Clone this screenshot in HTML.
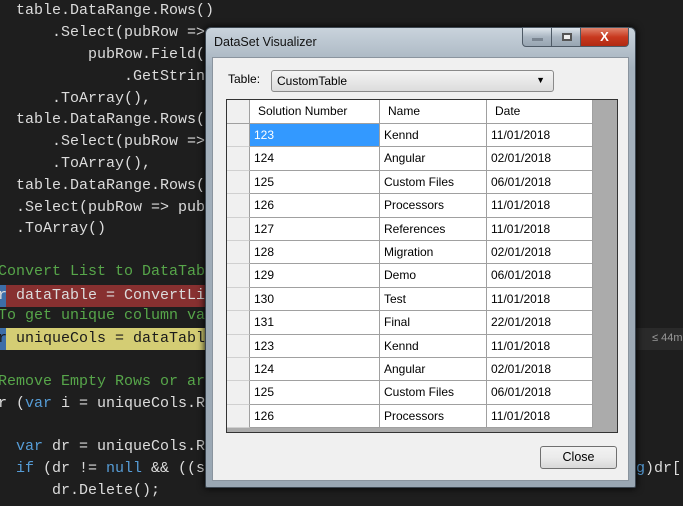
<!DOCTYPE html>
<html><head><meta charset="utf-8"><style>
*{margin:0;padding:0;box-sizing:border-box}
body{width:683px;height:506px;overflow:hidden;background:#1e1e1e;position:relative;font-family:"Liberation Mono",monospace}
.l{position:absolute;left:16px;font-size:15px;color:#dcdcdc;white-space:pre;line-height:20px;height:20px}
.c{color:#57a64a}.k{color:#569cd6}
.win{position:absolute;left:205px;top:27px;width:431px;height:461px;border-radius:6px 6px 2px 2px;background:linear-gradient(#c9d3dc,#a4b1bd 40px,#9aa7b3);border:1px solid #3c4650;box-shadow:0 0 8px #000}
.ui{font-family:"Liberation Sans",sans-serif;font-size:12px;color:#000}
.title{position:absolute;left:8px;top:7px;font-size:12.5px;color:#111}
.client{position:absolute;left:6px;top:29px;width:417px;height:424px;background:#f0f0f0;border:1px solid #8a949e}
.btn{position:absolute;top:-1px;height:20px;border:1px solid #4e5a66;background:linear-gradient(#dfe6ec,#aab6c2 50%,#98a5b2)}
.grid{position:absolute;left:13px;top:41px;width:392px;height:334px;border:1px solid #333;background:#ababab;overflow:hidden}
.row{position:absolute;left:0;height:23.4px;width:366px}
.cell{position:absolute;top:0;height:100%;background:#fff;border-right:1px solid #a0a0a0;border-bottom:1px solid #a0a0a0;padding-left:4px;line-height:22px;font-size:12px}
.rh{position:absolute;left:0;top:0;width:23px;height:100%;background:#f0f0f0;border-right:1px solid #a0a0a0;border-bottom:1px solid #d0d0d0}
</style></head><body>
<div class="l" style="top:1px">table.DataRange.Rows()</div>
<div class="l" style="top:23px">    .Select(pubRow =></div>
<div class="l" style="top:45px">        pubRow.Field(</div>
<div class="l" style="top:67px">            .GetStrin</div>
<div class="l" style="top:89px">    .ToArray(),</div>
<div class="l" style="top:110px">table.DataRange.Rows(</div>
<div class="l" style="top:132px">    .Select(pubRow =></div>
<div class="l" style="top:154px">    .ToArray(),</div>
<div class="l" style="top:176px">table.DataRange.Rows(</div>
<div class="l" style="top:198px">.Select(pubRow => pub</div>
<div class="l" style="top:219px">.ToArray()</div>
<div class="l c" style="top:262px;left:-2px">Convert List to DataTab</div>
<div style="position:absolute;left:0;top:285px;width:210px;height:22px;background:#873030"></div>
<div style="position:absolute;left:0;top:285px;width:6px;height:22px;background:#3d6ea8"></div>
<div class="l" style="top:286px;left:-2px">r dataTable = ConvertLi</div>
<div class="l c" style="top:306px;left:-2px">To get unique column va</div>
<div style="position:absolute;left:0;top:328px;width:210px;height:22px;background:#d4cd74"></div>
<div style="position:absolute;left:0;top:328px;width:6px;height:22px;background:#3d6ea8"></div>
<div class="l" style="top:329px;left:-2px;color:#1a1a1a">r uniqueCols = dataTabl</div>
<div style="position:absolute;left:636px;top:328px;width:47px;height:22px;background:#2a2a2a"></div>
<div class="ui" style="position:absolute;left:652px;top:332px;color:#999;font-size:11px">≤ 44m</div>
<div class="l c" style="top:372px;left:-2px">Remove Empty Rows or ar</div>
<div class="l" style="top:394px;left:-2px">r (<span class="k">var</span> i = uniqueCols.R</div>
<div class="l" style="top:437px"><span class="k">var</span> dr = uniqueCols.R</div>
<div class="l" style="top:459px"><span class="k">if</span> (dr != <span class="k">null</span> &amp;&amp; ((s</div>
<div class="l" style="top:481px">    dr.Delete();</div>
<div class="l" style="top:459px;left:636px"><span class="k">g</span>)dr[</div>

<div class="win ui">
<div class="title">DataSet Visualizer</div>
<div class="btn" style="left:316px;width:30px;border-radius:0 0 0 4px"><div style="position:absolute;left:9px;top:10px;width:11px;height:3px;background:#7a8591"></div></div>
<div class="btn" style="left:345px;width:30px"><div style="position:absolute;left:10px;top:5px;width:10px;height:8px;border:2px solid #555;background:#eee"></div></div>
<div class="btn" style="left:374px;width:49px;border-radius:0 0 4px 0;background:linear-gradient(#e0846d,#c8391f 50%,#b12a12);color:#fff;text-align:center;font-weight:bold;font-size:13px;line-height:17px">X</div>
<div class="client">
<div style="position:absolute;left:15px;top:14px">Table:</div>
<div style="position:absolute;left:58px;top:12px;width:283px;height:22px;border:1px solid #8a8a8a;border-radius:3px;background:linear-gradient(#f4f4f4,#dcdcdc);padding:3px 5px">CustomTable<span style="position:absolute;right:8px;top:4px;font-size:9px">▼</span></div>
<div class="grid">
<div class="row" style="top:0;height:24px">
<div class="rh" style="border-bottom:1px solid #a0a0a0"></div>
<div class="cell" style="left:23px;width:130px;padding-left:8px">Solution Number</div>
<div class="cell" style="left:153px;width:107px;padding-left:8px">Name</div>
<div class="cell" style="left:260px;width:106px;padding-left:8px">Date</div>
</div>
<div id="rows"></div>
</div>
<div style="position:absolute;left:327px;top:388px;width:77px;height:23px;border:1px solid #707070;border-radius:3px;background:linear-gradient(#f2f2f2,#ebebeb 50%,#d8d8d8);text-align:center;line-height:21px;font-size:12.5px">Close</div>
</div>
</div>
<script>
var d=[["123","Kennd","11/01/2018"],["124","Angular","02/01/2018"],["125","Custom Files","06/01/2018"],["126","Processors","11/01/2018"],["127","References","11/01/2018"],["128","Migration","02/01/2018"],["129","Demo","06/01/2018"],["130","Test","11/01/2018"],["131","Final","22/01/2018"],["123","Kennd","11/01/2018"],["124","Angular","02/01/2018"],["125","Custom Files","06/01/2018"],["126","Processors","11/01/2018"]];
var h="";d.forEach(function(r,i){var t=24+i*23.4;var s=i==0?'background:#3399ff;color:#fff;':'';
h+='<div class="row" style="top:'+t+'px"><div class="rh"></div><div class="cell" style="left:23px;width:130px;'+s+'">'+r[0]+'</div><div class="cell" style="left:153px;width:107px">'+r[1]+'</div><div class="cell" style="left:260px;width:106px">'+r[2]+'</div></div>';});
document.getElementById("rows").innerHTML=h;
</script>
</body></html>
